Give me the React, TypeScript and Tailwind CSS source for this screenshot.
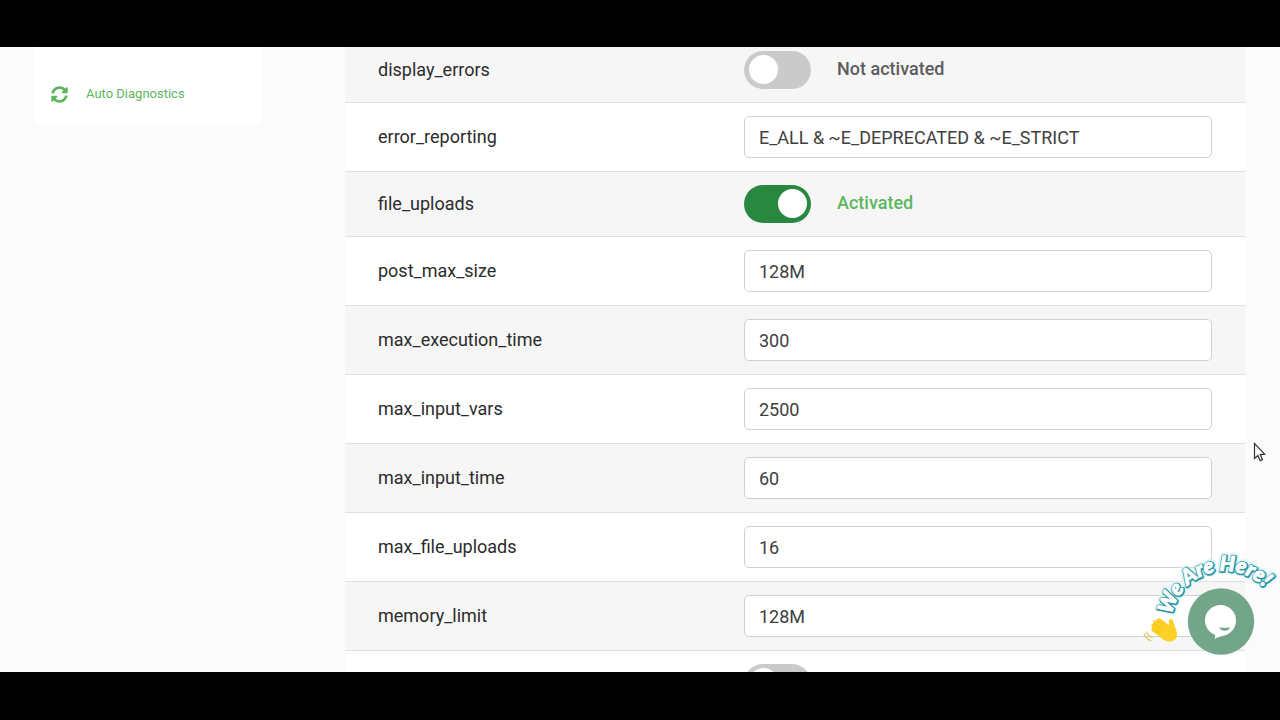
import { useState } from "react";
import { FaSyncAlt } from "react-icons/fa";

type Setting = {
  name: string;
  type: "text" | "switch";
  value?: string;
  on?: boolean;
};

const settings: Setting[] = [
  { name: "display_errors", type: "switch", on: false },
  { name: "error_reporting", type: "text", value: "E_ALL & ~E_DEPRECATED & ~E_STRICT" },
  { name: "file_uploads", type: "switch", on: true },
  { name: "post_max_size", type: "text", value: "128M" },
  { name: "max_execution_time", type: "text", value: "300" },
  { name: "max_input_vars", type: "text", value: "2500" },
  { name: "max_input_time", type: "text", value: "60" },
  { name: "max_file_uploads", type: "text", value: "16" },
  { name: "memory_limit", type: "text", value: "128M" },
];

function Switch({ id, label, checked, onChange }: { id?: string; label?: string; checked: boolean; onChange: () => void }) {
  return (
    <input
      id={id}
      type="checkbox"
      aria-label={label}
      checked={checked}
      onChange={onChange}
      className="block h-[38px] w-[67px] shrink-0 cursor-pointer appearance-none rounded-full bg-[#cacaca] py-1 pl-[5px] before:block before:size-[29px] before:rounded-full before:bg-white before:content-[''] checked:bg-[#28883f] checked:before:ml-[29px]"
    />
  );
}

function SettingRow({ setting }: { setting: Setting }) {
  const [on, setOn] = useState(!!setting.on);

  return (
    <tr className="odd:bg-[#f6f6f6] even:bg-white">
      <th scope="row" className="w-[366px] border-t border-[#e0e0e0] px-[33px] text-left font-normal">
        <label htmlFor={setting.name}>{setting.name}</label>
      </th>
      <td className="border-t border-[#e0e0e0] px-[33px] py-[13px]">
        {setting.type === "switch" ? (
          <div className="flex items-start gap-[26px]">
            <Switch id={setting.name} checked={on} onChange={() => setOn(!on)} />
            <span className={on ? "pt-1 font-medium text-[#5cb660]" : "pt-1 font-medium text-[#5c5c5c]"}>
              {on ? "Activated" : "Not activated"}
            </span>
          </div>
        ) : (
          <input
            id={setting.name}
            type="text"
            defaultValue={setting.value}
            className="block h-[42px] w-full rounded-[5px] border border-[#d0d0d0] bg-white px-3.5 text-[#404040] outline-none"
          />
        )}
      </td>
    </tr>
  );
}

function ChatWidget() {
  return (
    <button type="button" aria-label="Open chat" className="absolute right-0 bottom-0 cursor-pointer">
      <svg width="140" height="122" viewBox="1140 550 140 122" className="block">
        <defs>
          <path id="greeting-arc" d="M1171 625a54 54 0 0 1 108 0" />
          <text id="greeting">
            <textPath href="#greeting-arc" startOffset="10">
              We Are Here!
            </textPath>
          </text>
        </defs>

        {/* Greeting: glow, outline, letters */}
        <g fontFamily="Lato, sans-serif" fontWeight="900" fontStyle="italic" fontSize="21" strokeLinejoin="round">
          <use href="#greeting" fill="#d5f6f8" stroke="#d5f6f8" strokeWidth="7" opacity="0.6" />
          <use href="#greeting" x="0.5" y="0.5" fill="#2a96a3" stroke="#2a96a3" strokeWidth="3.4" />
          <use href="#greeting" fill="#fff" stroke="#fff" strokeWidth="0.9" />
        </g>

        {/* Waving hand */}
        <g transform="translate(1140 550) scale(0.333)">
          <path
            d="M88 226L86 213C87 206 97 205 99 212C104 232 113 245 111 260C105 277 84 279 70 269L39 246C32 241 33 234 38 233C31 229 33 221 41 221C36 213 43 208 51 212C48 207 54 203 60 206Z"
            fill="#fdd025"
          />
          <path d="M41 221L64 238M51 212L72 228M38 233L60 249" fill="none" stroke="#f0b41e" strokeWidth="2" />
          <path d="M12 250C15 261 23 269 34 273M19 245C22 254 28 260 38 263" fill="none" stroke="#e3c96a" strokeWidth="4" />
        </g>

        {/* Chat bubble */}
        <circle cx="1221" cy="621.5" r="33.2" fill="#73a588" />
        <path
          d="M1220.5 605a15.500 15.500 0 0 1 15.500 15.500c0 8-6 14-12.500 15.300-3 .6-6 1.500-8.800 3.200l.6-4.200c-6-2-10.300-7.600-10.300-14.300a15.500 15.500 0 0 1 15.500-15.500z"
          fill="#fff"
        />
        <path d="M1219 627.300q5.500 1 11 0c-1.500 4.500-8.500 5-11 0z" fill="#73a588" />
      </svg>
    </button>
  );
}

function Pointer() {
  return (
    <svg
      width="14"
      height="21"
      viewBox="0 0 14 21"
      aria-hidden="true"
      className="pointer-events-none absolute top-[395px] right-[13px]"
    >
      <path
        d="M1.500 1.500v15l3.400-3 2.300 5.300 2.300-1-2.300-5.200 4.500-.4z"
        fill="#fff"
        stroke="#303030"
        strokeWidth="1.200"
      />
    </svg>
  );
}

export default function App() {
  const [more, setMore] = useState(false);

  return (
    <div className="flex h-screen flex-col bg-black font-[Roboto,sans-serif] text-lg text-[#2b2b2b]">
      <main className="relative mt-[47px] mb-12 flex flex-1 items-start overflow-hidden bg-[#fbfbfb] px-[35px]">
        {/* Sidebar */}
        <nav className="mr-[83px] w-[227px] shrink-0 rounded-b-md bg-white px-4 pt-[37px] pb-5">
          <a href="#diagnostics" className="flex items-center gap-[18px] text-[13px] leading-5 text-[#5cb660]">
            <FaSyncAlt size={17} />
            Auto Diagnostics
          </a>
        </nav>

        {/* PHP settings */}
        <table className="-mt-2.5 flex-1 border-separate border-spacing-0">
          <tbody>
            {settings.map((s) => (
              <SettingRow key={s.name} setting={s} />
            ))}
            <tr className="bg-white">
              <td className="border-t border-[#e0e0e0]" />
              <td className="border-t border-[#e0e0e0] px-[33px] py-[13px]">
                <Switch label="More options" checked={more} onChange={() => setMore(!more)} />
              </td>
            </tr>
          </tbody>
        </table>

        <Pointer />
        <ChatWidget />
      </main>
    </div>
  );
}
